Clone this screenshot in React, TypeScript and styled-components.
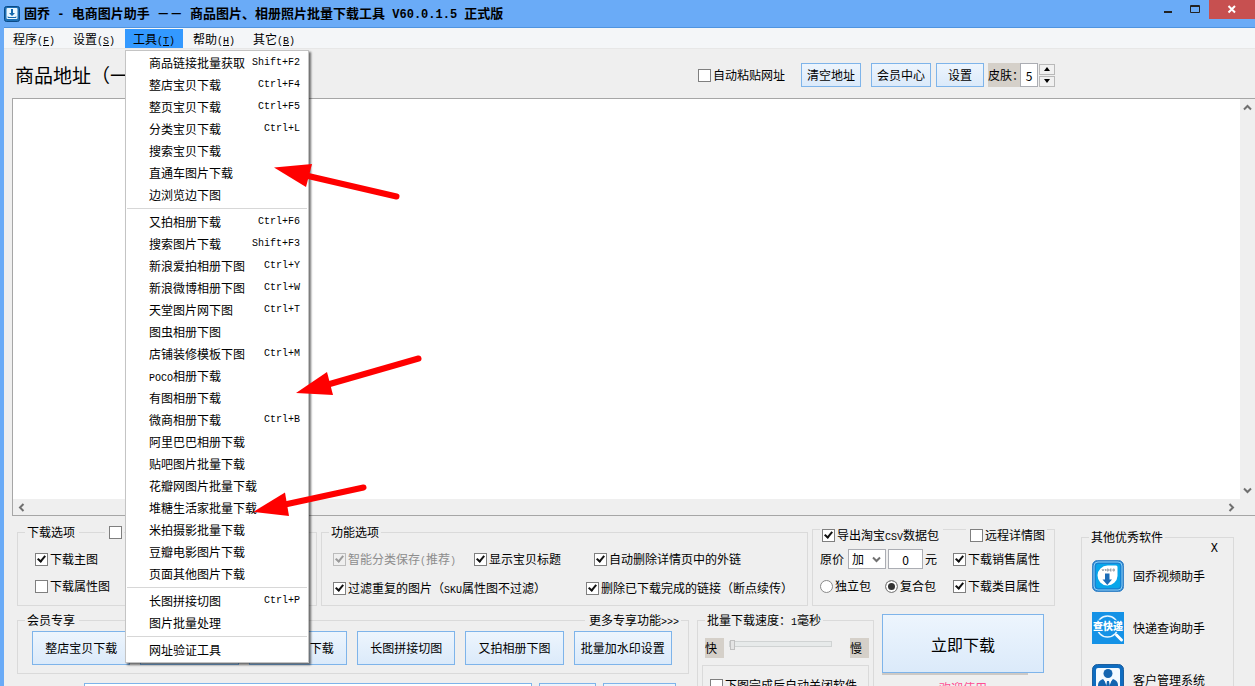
import React from "react";
import styled, { createGlobalStyle, css } from "styled-components";

const Global = createGlobalStyle`
  *, *::before, *::after { box-sizing: border-box; }
  body {
    margin: 0;
    overflow: hidden;
    color: #000;
    font: 12px/16px "Noto Sans CJK SC", sans-serif;
  }
  button, input, select, textarea { font: inherit; color: inherit; margin: 0; border-radius: 0; }
`;

const line = "#dadada";
const face = "#efefef";
const accent = "#7eb4ea";

const Latin = styled.span`
  font-family: "Liberation Mono", monospace;
  font-size: 10px;
  line-height: 10px;
`;

/* ---------- window frame ---------- */

const Window = styled.div`
  position: relative;
  display: flex;
  flex-direction: column;
  height: 100vh;
  overflow: hidden;
  background: ${face};
  border-left: 4px solid #6aabf7;
`;

const TitleBar = styled.header`
  display: flex;
  align-items: flex-start;
  height: 28px;
  margin-left: -4px;
  flex: none;
  background: #6aabf7;
  border-bottom: 1px solid #4f94e0;
`;

const Title = styled.h1`
  display: flex;
  align-items: center;
  gap: 4px;
  flex: 1;
  margin: 0;
  padding: 5px 0 0 4px;
  font-size: 13px;
  line-height: 16px;
  font-weight: 700;
  white-space: pre;
`;

const TitleLatin = styled.span`
  font-family: "Liberation Mono", monospace;
  font-size: 12px;
`;

const CaptionButton = styled.button<{ $close?: boolean }>`
  display: flex;
  justify-content: center;
  width: ${(p) => (p.$close ? 46 : 27)}px;
  height: 19px;
  padding: 3px 0 0;
  border: 0;
  background: ${(p) => (p.$close ? "#c75050" : "transparent")};
`;

/* ---------- menu ---------- */

const MenuBar = styled.nav`
  display: flex;
  flex: none;
  gap: 2px;
  height: 21px;
  padding: 1px 0 0 1px;
  background: #f4f6f8;
  border-bottom: 1px solid #e7e7e7;
`;

const MenuSlot = styled.div`
  position: relative;
`;

const MenuButton = styled.button<{ $open?: boolean }>`
  width: 58px;
  height: 19px;
  padding: 0;
  line-height: 18px;
  white-space: nowrap;
  border: 0;
  background: ${(p) => (p.$open ? "#3399ff" : "transparent")};
`;

const Popup = styled.div`
  position: absolute;
  z-index: 2;
  top: 21px;
  left: 0;
  width: 184px;
  padding: 1px;
  background: #fff;
  border: 1px solid #c4c4c4;
  box-shadow: 2px 2px 2px rgba(0, 0, 0, 0.55);
`;

const PopupItem = styled.button`
  display: flex;
  align-items: center;
  justify-content: space-between;
  width: 100%;
  height: 22px;
  padding: 0 7px 0 22px;
  border: 0;
  background: none;
  white-space: nowrap;
`;

const PopupRule = styled.hr`
  height: 1px;
  margin: 2px 0;
  border: 0;
  background: #d7d7d7;
`;

/* ---------- shared controls ---------- */

const Label = styled.label<{ $disabled?: boolean }>`
  display: inline-flex;
  align-items: center;
  gap: 2px;
  height: 16px;
  white-space: nowrap;
  color: ${(p) => (p.$disabled ? "#8d8d8d" : "inherit")};
`;

const Box = styled.input.attrs({ type: "checkbox" })`
  appearance: none;
  position: relative;
  flex: none;
  width: 13px;
  height: 13px;
  background: #fff;
  border: 1px solid #7f7f7f;
  &:checked::after {
    content: "";
    position: absolute;
    left: 3px;
    top: 0;
    width: 5px;
    height: 8px;
    border: solid #111;
    border-width: 0 2px 2px 0;
    transform: rotate(40deg);
  }
  &:disabled {
    background: ${face};
    border-color: #bcbcbc;
  }
  &:disabled::after {
    border-color: #9a9a9a;
  }
`;

const Radio = styled.input.attrs({ type: "radio" })`
  appearance: none;
  flex: none;
  width: 13px;
  height: 13px;
  background: #fff;
  border: 1px solid #8a8a8a;
  border-radius: 50%;
  &:checked {
    background: #333;
    box-shadow: inset 0 0 0 2px #fff;
  }
`;

const buttonLook = css`
  border: 1px solid ${accent};
  background: linear-gradient(#edf5fd, #dbeafa);
  white-space: nowrap;
`;

const Button = styled.button<{ $width?: number; $height: number }>`
  ${buttonLook}
  width: ${(p) => (p.$width ? `${p.$width}px` : "100%")};
  height: ${(p) => p.$height}px;
  padding: 0;
`;

const Tag = styled.span<{ $height: number; $width: number }>`
  display: inline-flex;
  align-items: center;
  flex: none;
  width: ${(p) => p.$width}px;
  height: ${(p) => p.$height}px;
  background: #d5d0c9;
  white-space: nowrap;
`;

const Field = styled.input<{ $width: number; $height: number }>`
  width: ${(p) => p.$width}px;
  height: ${(p) => p.$height}px;
  padding: 0;
  text-align: center;
  background: #fff;
  border: 1px solid #abadb3;
`;

/* ---------- toolbar ---------- */

const Toolbar = styled.div`
  display: flex;
  align-items: center;
  flex: none;
  height: 49px;
  padding: 3px 200px 0 11px;
`;

const Heading = styled.h2`
  flex: 1;
  margin: 0;
  font-size: 19px;
  line-height: 24px;
  font-weight: 400;
`;

const Actions = styled.div`
  display: flex;
  align-items: center;
`;

const ActionGroup = styled.div<{ $gap: number; $before: number }>`
  display: flex;
  gap: ${(p) => p.$gap}px;
  margin-left: ${(p) => p.$before}px;
`;

const Spinner = styled.div`
  display: grid;
  gap: 1px;
  margin-left: 1px;
`;

const SpinButton = styled.button`
  display: grid;
  place-items: center;
  width: 16px;
  height: 11px;
  padding: 0;
  background: #f1f1f1;
  border: 1px solid #b9b9b9;
`;

/* ---------- address list ---------- */

const Editor = styled.section`
  display: grid;
  grid-template: minmax(0, 1fr) 16px / minmax(0, 1fr) 15px;
  flex: 1;
  min-height: 0;
  margin-left: 8px;
  border: 1px solid #a6a6a6;
  border-right: 0;
`;

const Addresses = styled.textarea`
  width: 100%;
  height: 100%;
  padding: 2px;
  border: 0;
  outline: 0;
  resize: none;
  background: #fff;
`;

const ScrollTrack = styled.div<{ $vertical?: boolean }>`
  display: flex;
  flex-direction: ${(p) => (p.$vertical ? "column" : "row")};
  align-items: center;
  justify-content: space-between;
  background: ${face};
`;

const ScrollButton = styled.button`
  display: grid;
  place-items: center;
  width: 17px;
  height: 17px;
  padding: 0;
  border: 0;
  background: none;
`;

/* ---------- option panels ---------- */

const Bottom = styled.main`
  display: flex;
  flex: 0 0 170px;
  gap: 26px;
  min-height: 0;
  overflow: hidden;
  padding: 8px 21px 0 13px;
`;

const Options = styled.div`
  display: grid;
  flex: 1;
  align-content: start;
  gap: 6px;
`;

const TopRow = styled.div`
  display: grid;
  grid-template-columns: 300px minmax(0, 1fr) 243px;
  gap: 4px;
`;

const LowerRow = styled.div`
  display: grid;
  grid-template-columns: minmax(0, 1fr) 177px 162px;
  gap: 8px;
  padding-right: 11px;
`;

const Group = styled.fieldset`
  min-width: 0;
  margin: 0;
  padding: 0 7px;
  border: 1px solid ${line};
`;

const Legend = styled.legend<{ $wide?: boolean; $height?: number }>`
  display: flex;
  align-items: center;
  gap: 4px;
  width: ${(p) => (p.$wide ? "100%" : "auto")};
  height: ${(p) => p.$height ?? 16}px;
  padding: 0 2px;
  white-space: nowrap;
`;

const LegendRule = styled.span<{ $width?: number }>`
  flex: ${(p) => (p.$width ? `0 0 ${p.$width}px` : "1")};
  height: 1px;
  background: ${line};
`;

const Hanging = styled.div`
  display: flex;
  padding-top: 12px;
`;

const Rows = styled.div<{ $gap: number; $top: number; $left: number }>`
  display: grid;
  gap: ${(p) => p.$gap}px;
  padding: ${(p) => p.$top}px 0 7px ${(p) => p.$left}px;
`;

const Columns = styled.div<{ $cols: string }>`
  display: grid;
  grid-template-columns: ${(p) => p.$cols};
  align-items: center;
`;

const PriceRow = styled.div`
  display: flex;
  align-items: center;
  gap: 2px;
  height: 24px;
`;

const SelectWrap = styled.span`
  display: inline-grid;
  grid-template-areas: "a";
  align-items: center;
  margin-left: 2px;
  & > * { grid-area: a; }
  & > svg { justify-self: end; margin-right: 5px; pointer-events: none; }
`;

const Select = styled.select`
  appearance: none;
  width: 38px;
  height: 20px;
  padding: 0 0 0 3px;
  line-height: 16px;
  background: #fff;
  border: 1px solid #abadb3;
`;

const RadioRow = styled.div`
  display: flex;
  align-items: center;
  gap: 14px;
  height: 24px;
`;

const MemberButtons = styled.div`
  display: grid;
  grid-template-columns: repeat(6, minmax(0, 1fr));
  gap: 10px;
  padding: 3px 9px 8px 7px;
`;

const MoreLink = styled.a`
  color: inherit;
  text-decoration: none;
  line-height: 16px;
`;

const SaveRow = styled.div`
  display: flex;
  gap: 7px;
  padding: 9px 0 0 67px;
`;

const SavePath = styled.input`
  width: 448px;
  height: 24px;
  background: #fff;
  border: 1px solid ${accent};
`;

const SpeedRow = styled.div`
  display: flex;
  align-items: center;
  gap: 5px;
  margin-right: -3px;
  padding: 10px 0 7px;
`;

const Slider = styled.input.attrs({ type: "range" })`
  appearance: none;
  flex: none;
  width: 103px;
  height: 12px;
  margin: 0 auto 8px 0;
  background: none;
  &::-webkit-slider-runnable-track {
    height: 6px;
    background: #e7eaea;
    border: 1px solid #d0d3d3;
  }
  &::-webkit-slider-thumb {
    appearance: none;
    width: 5px;
    height: 10px;
    margin-top: -2px;
    background: #e4e4e4;
    border: 1px solid #c0c0c0;
  }
`;

const AfterBox = styled.div`
  height: 60px;
  margin: 0 -3px;
  padding: 11px 7px;
  border: 1px solid ${line};
`;

const StartColumn = styled.div`
  display: flex;
  flex-direction: column;
  align-items: center;
  padding-top: 2px;
`;

const StartButton = styled.button`
  ${buttonLook}
  width: 100%;
  height: 59px;
  font-size: 16px;
`;

const StartShade = styled.div`
  align-self: stretch;
  height: 2px;
  margin-right: 16px;
  background: #cdc9c5;
`;

const Welcome = styled.p`
  margin: 5px 0 0;
  color: #ff4f93;
`;

/* ---------- other software ---------- */

const Software = styled(Group)`
  flex: 0 0 153px;
  height: 220px;
  margin-top: 5px;
`;

const CloseRow = styled.div`
  display: flex;
  justify-content: flex-end;
  height: 15px;
  padding-right: 8px;
`;

const CloseButton = styled.button`
  height: 8px;
  padding: 0;
  border: 0;
  background: none;
  font-family: "Liberation Mono", monospace;
  line-height: 8px;
`;

const AppList = styled.ul`
  display: grid;
  gap: 20px;
  margin: 0;
  padding: 0 0 0 3px;
  list-style: none;
`;

const AppLink = styled.a`
  display: flex;
  align-items: center;
  gap: 9px;
  color: inherit;
  text-decoration: none;
`;

const Marks = styled.svg`
  position: absolute;
  z-index: 3;
  top: 0;
  left: -4px;
  pointer-events: none;
`;

/* ---------- data ---------- */

const toolMenu: [string, string?][][] = [
  [
    ["商品链接批量获取", "Shift+F2"],
    ["整店宝贝下载", "Ctrl+F4"],
    ["整页宝贝下载", "Ctrl+F5"],
    ["分类宝贝下载", "Ctrl+L"],
    ["搜索宝贝下载"],
    ["直通车图片下载"],
    ["边浏览边下图"],
  ],
  [
    ["又拍相册下载", "Ctrl+F6"],
    ["搜索图片下载", "Shift+F3"],
    ["新浪爱拍相册下图", "Ctrl+Y"],
    ["新浪微博相册下图", "Ctrl+W"],
    ["天堂图片网下图", "Ctrl+T"],
    ["图虫相册下图"],
    ["店铺装修模板下图", "Ctrl+M"],
    ["POCO相册下载"],
    ["有图相册下载"],
    ["微商相册下载", "Ctrl+B"],
    ["阿里巴巴相册下载"],
    ["贴吧图片批量下载"],
    ["花瓣网图片批量下载"],
    ["堆糖生活家批量下载"],
    ["米拍摄影批量下载"],
    ["豆瓣电影图片下载"],
    ["页面其他图片下载"],
  ],
  [["长图拼接切图", "Ctrl+P"], ["图片批量处理"]],
  [["网址验证工具"]],
];

const menus = [
  ["程序", "F"],
  ["设置", "S"],
  ["工具", "T"],
  ["帮助", "H"],
  ["其它", "B"],
];

const memberTools = ["整店宝贝下载", "", "分类宝贝下载", "长图拼接切图", "又拍相册下图", "批量加水印设置"];

/* ---------- pieces ---------- */

/* Sets the ASCII runs of a label in the half-width face. */
const Mixed = ({ text }: { text: string }) => (
  <span>
    {text.split(/([\x21-\x7e]+)/).map((part, i) => (i % 2 ? <Latin key={i}>{part}</Latin> : part))}
  </span>
);

const Check = ({ text, on, disabled }: { text: string; on?: boolean; disabled?: boolean }) => (
  <Label $disabled={disabled}>
    <Box defaultChecked={on} disabled={disabled} />
    <Mixed text={text} />
  </Label>
);

const Chevron = ({ turn = 0, size = 9 }: { turn?: number; size?: number }) => (
  <svg width={size} height={size} viewBox="0 0 9 9">
    <path d="M1 2.5 4.5 6 8 2.5" transform={`rotate(${turn} 4.5 4.5)`} fill="none" stroke="#707070" strokeWidth="2" />
  </svg>
);

const LogoIcon = () => (
  <svg width="16" height="16" viewBox="0 0 16 16">
    <rect x=".5" y=".5" width="15" height="15" rx="2" fill="#1c6fb5" stroke="#0b4a86" />
    <rect x="2.5" y="2" width="11" height="11" rx="1" fill="#e9f6ff" />
    <path d="M7 3h2v4h2L8 10 5 7h2z" fill="#1468ad" />
    <path d="M4 10.5v1h8v-1" fill="none" stroke="#1468ad" />
  </svg>
);

const VideoIcon = () => (
  <svg width="32" height="32" viewBox="0 0 32 32">
    <rect x=".5" y=".5" width="31" height="31" rx="5" fill="#2b7fc9" stroke="#3a86c8" />
    <rect x="2" y="2" width="28" height="28" rx="4" fill="#1683d4" stroke="#8fd0f6" />
    <rect x="4" y="4" width="24" height="24" rx="2" fill="#08a6ea" />
    <path d="M15.5 5.500h8.500a1.500 1.500 0 0 1 1.500 1.500v9a10 10 0 1 1-10-10.500z" fill="#fff" />
    <path d="M10 9l1 2 1-2M13.500 9v2M15 9v2h1.300V9zM19.500 9H18v2h1.500M18 10h1.500M21 9h1.300v2H21z" fill="none" stroke="#75828c" strokeWidth=".7" />
    <path d="M13 13.500h4.500v6H20l-4.700 5.500-4.800-5.500H13z" fill="#1c6db8" />
  </svg>
);

const ExpressIcon = () => (
  <svg width="32" height="32" viewBox="0 0 32 32">
    <rect width="32" height="32" fill="#1592e6" />
    <circle cx="15.500" cy="14.500" r="10.500" fill="none" stroke="#e8f6ff" strokeWidth="1.500" />
    <path d="M24.500 23l5 5" stroke="#fff" strokeWidth="3" strokeLinecap="round" />
    <text
      x="16"
      y="18"
      textAnchor="middle"
      fontSize="10"
      fontWeight="900"
      fill="#fff"
      stroke="#1592e6"
      strokeWidth="2"
      paintOrder="stroke"
      fontFamily="Noto Sans CJK SC, sans-serif"
    >
      查快递
    </text>
  </svg>
);

const ClientIcon = () => (
  <svg width="32" height="32" viewBox="0 0 32 32">
    <rect x=".5" y=".5" width="31" height="31" rx="5" fill="#0e6cc0" stroke="#1c5f9f" />
    <rect x="4" y="4" width="24" height="24" rx="2" fill="#f4faff" />
    <circle cx="16" cy="9.500" r="4.500" fill="#1465b0" />
    <path d="M6 28v-7c0-3 2-5 5-6l5 6 5-6c3 1 5 3 5 6v7z" fill="#1465b0" />
    <path d="M12 15l4 11 4-11-4 2z" fill="#fff" />
    <path d="M15 17h2l1 6-2 3-2-3z" fill="#1465b0" />
  </svg>
);

const Arrows = () => (
  <Marks width="440" height="530" viewBox="0 0 440 530" fill="#ff0000" stroke="#ff0000">
    <path d="M274 167.500 312 164 306 187z" stroke="none" />
    <path d="M306 175.500 396.500 196.500" strokeWidth="6" strokeLinecap="round" />
    <path d="M296 393 327 372 333 395z" stroke="none" />
    <path d="M328 384.500 418.500 358.500" strokeWidth="6" strokeLinecap="round" />
    <path d="M253 512 285 492.500 289 516z" stroke="none" />
    <path d="M285 504.500 363.500 487.500" strokeWidth="6" strokeLinecap="round" />
  </Marks>
);

const ToolPopup = () => (
  <Popup role="menu">
    {toolMenu.map((section, s) => (
      <React.Fragment key={s}>
        {s > 0 && <PopupRule />}
        {section.map(([name, keys]) => (
          <PopupItem key={name} role="menuitem">
            <Mixed text={name} />
            {keys && <Latin>{keys}</Latin>}
          </PopupItem>
        ))}
      </React.Fragment>
    ))}
  </Popup>
);

export default function App() {
  return (
    <Window>
      <Global />
      <TitleBar>
        <Title>
          <LogoIcon />
          <span>
            固乔<TitleLatin> - </TitleLatin>电商图片助手<TitleLatin> </TitleLatin>－－<TitleLatin> </TitleLatin>
            商品图片、相册照片批量下载工具<TitleLatin> V60.0.1.5 </TitleLatin>正式版
          </span>
        </Title>
        <CaptionButton aria-label="最小化">
          <svg width="11" height="12"><path d="M1 9h8" stroke="#222" strokeWidth="2" /></svg>
        </CaptionButton>
        <CaptionButton aria-label="最大化">
          <svg width="11" height="12"><path d="M.5 2.500h9v7h-9zM0 3.500h10" fill="none" stroke="#222" /></svg>
        </CaptionButton>
        <CaptionButton $close aria-label="关闭">
          <svg width="10" height="12"><path d="M1.500 3 8 9.500M8 3 1.500 9.500" stroke="#fff" strokeWidth="2" /></svg>
        </CaptionButton>
      </TitleBar>

      <MenuBar>
        {menus.map(([name, key]) => (
          <MenuSlot key={key}>
            <MenuButton $open={key === "T"}>
              {name}
              <Latin>
                (<u>{key}</u>)
              </Latin>
            </MenuButton>
            {key === "T" && <ToolPopup />}
          </MenuSlot>
        ))}
      </MenuBar>

      <Toolbar>
        <Heading>商品地址（一</Heading>
        <Actions>
          <Check text="自动粘贴网址" />
          <ActionGroup $gap={10} $before={16}>
            <Button $width={60} $height={24}>清空地址</Button>
            <Button $width={60} $height={24}>会员中心</Button>
          </ActionGroup>
          <ActionGroup $gap={4} $before={5}>
            <Button $width={48} $height={24}>设置</Button>
            <Tag as="label" htmlFor="skin" $width={32} $height={24}>皮肤：</Tag>
          </ActionGroup>
          <Field id="skin" defaultValue="5" $width={18} $height={24} />
          <Spinner>
            <SpinButton aria-label="增加">
              <svg width="6" height="4"><path d="M0 4 3 0 6 4z" /></svg>
            </SpinButton>
            <SpinButton aria-label="减少">
              <svg width="6" height="4"><path d="M0 0h6L3 4z" /></svg>
            </SpinButton>
          </Spinner>
        </Actions>
      </Toolbar>

      <Editor>
        <Addresses aria-label="商品地址" />
        <ScrollTrack $vertical>
          <ScrollButton aria-label="向上"><Chevron turn={180} /></ScrollButton>
          <ScrollButton aria-label="向下"><Chevron /></ScrollButton>
        </ScrollTrack>
        <ScrollTrack>
          <ScrollButton aria-label="向左"><Chevron turn={90} /></ScrollButton>
          <ScrollButton aria-label="向右"><Chevron turn={-90} /></ScrollButton>
        </ScrollTrack>
        <ScrollTrack />
      </Editor>

      <Bottom>
        <Options>
          <TopRow>
            <Group>
              <Legend>
                下载选项
                <LegendRule $width={26} />
                <Box aria-label="全选" />
              </Legend>
              <Rows $gap={11} $top={11} $left={10}>
                <Check text="下载主图" on />
                <Check text="下载属性图" />
              </Rows>
            </Group>

            <Group>
              <Legend>功能选项</Legend>
              <Rows $gap={13} $top={11} $left={4}>
                <Columns $cols="141px 120px 1fr">
                  <Check text="智能分类保存(推荐)" on disabled />
                  <Check text="显示宝贝标题" on />
                  <Check text="自动删除详情页中的外链" on />
                </Columns>
                <Columns $cols="253px 1fr">
                  <Check text="过滤重复的图片（SKU属性图不过滤）" on />
                  <Check text="删除已下载完成的链接（断点续传）" on />
                </Columns>
              </Rows>
            </Group>

            <Group>
              <Legend $wide $height={10}>
                <Hanging><Check text="导出淘宝CSV数据包" on /></Hanging>
                <LegendRule />
                <Hanging><Check text="远程详情图" /></Hanging>
              </Legend>
              <Rows $gap={3} $top={13} $left={0}>
                <Columns $cols="133px 1fr">
                  <PriceRow>
                    <label htmlFor="mode">原价</label>
                    <SelectWrap>
                      <Select id="mode" defaultValue="加">
                        <option>加</option>
                      </Select>
                      <Chevron />
                    </SelectWrap>
                    <Field id="amount" aria-label="金额" defaultValue="0" $width={35} $height={20} />
                    <label htmlFor="amount">元</label>
                  </PriceRow>
                  <Check text="下载销售属性" on />
                </Columns>
                <Columns $cols="133px 1fr">
                  <RadioRow>
                    <Label><Radio name="pack" />独立包</Label>
                    <Label><Radio name="pack" defaultChecked />复合包</Label>
                  </RadioRow>
                  <Check text="下载类目属性" on />
                </Columns>
              </Rows>
            </Group>
          </TopRow>

          <LowerRow>
            <div>
              <Group>
                <Legend $wide>
                  会员专享
                  <LegendRule />
                  <MoreLink href="#more"><Mixed text="更多专享功能>>>" /></MoreLink>
                </Legend>
                <MemberButtons>
                  {memberTools.map((name, i) => (
                    <Button key={i} $height={34} aria-label={name || "整页宝贝下载"}>{name}</Button>
                  ))}
                </MemberButtons>
              </Group>
              <SaveRow>
                <SavePath aria-label="保存位置" />
                <Button aria-label="浏览" $width={57} $height={24} />
                <Button aria-label="打开" $width={73} $height={24} />
              </SaveRow>
            </div>

            <Group>
              <Legend><Mixed text="批量下载速度：1毫秒" /></Legend>
              <SpeedRow>
                <Tag $width={19} $height={20}>快</Tag>
                <Slider aria-label="批量下载速度" defaultValue={0} />
                <Tag $width={19} $height={20}>慢</Tag>
              </SpeedRow>
              <AfterBox>
                <Check text="下图完成后自动关闭软件" />
              </AfterBox>
            </Group>

            <StartColumn>
              <StartButton>立即下载</StartButton>
              <StartShade />
              <Welcome>欢迎使用</Welcome>
            </StartColumn>
          </LowerRow>
        </Options>

        <Software>
          <Legend>其他优秀软件</Legend>
          <CloseRow><CloseButton>X</CloseButton></CloseRow>
          <AppList>
            <li><AppLink href="#video"><VideoIcon />固乔视频助手</AppLink></li>
            <li><AppLink href="#express"><ExpressIcon />快递查询助手</AppLink></li>
            <li><AppLink href="#client"><ClientIcon />客户管理系统</AppLink></li>
          </AppList>
        </Software>
      </Bottom>
      <Arrows />
    </Window>
  );
}
